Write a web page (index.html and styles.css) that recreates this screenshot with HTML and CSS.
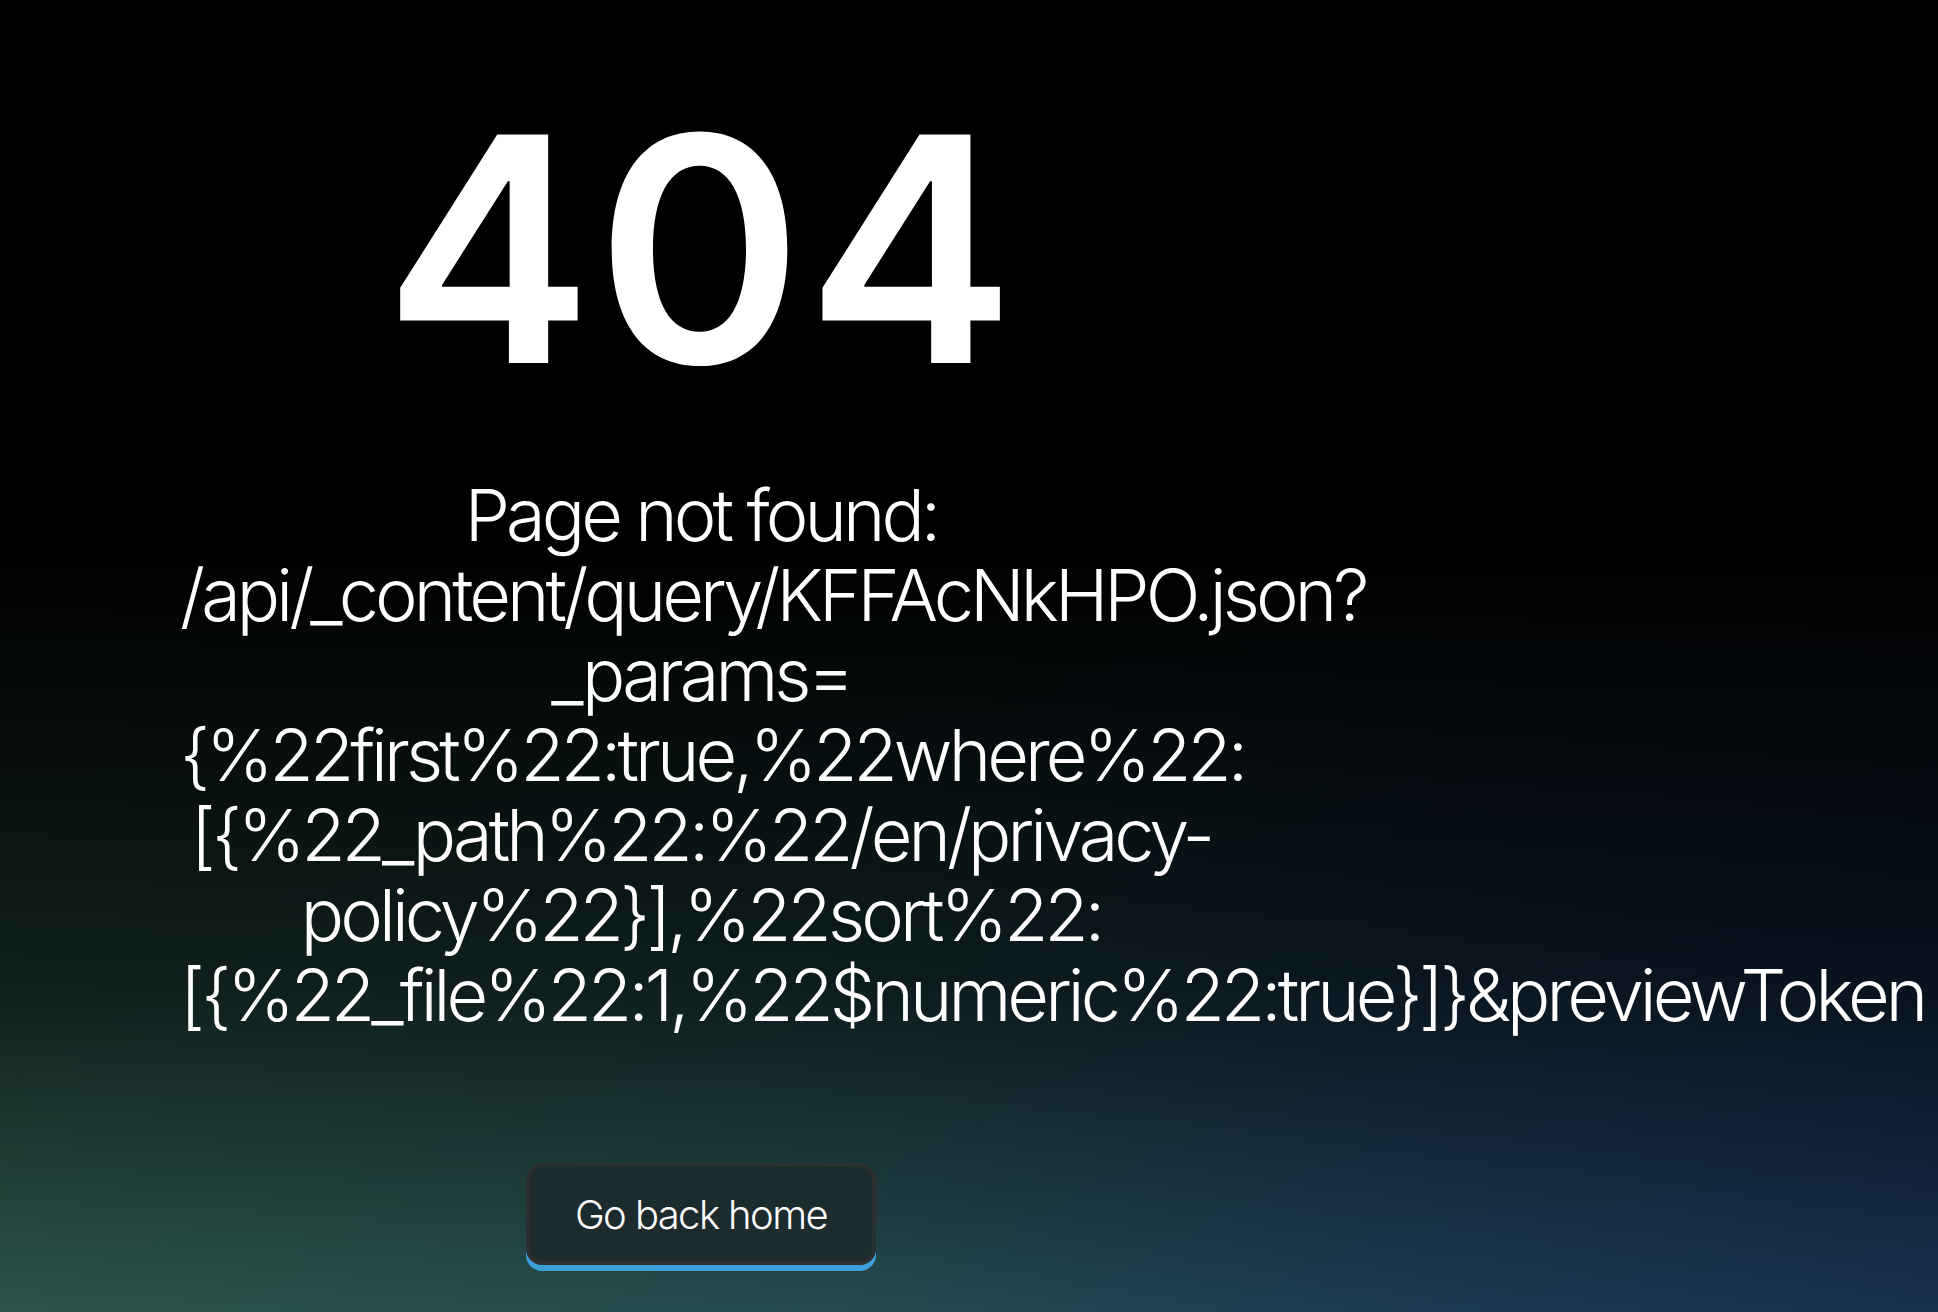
FILE: index.html
```html
<!DOCTYPE html>
<html lang="en">
<head>
<meta charset="utf-8">
<title>404 - Page not found</title>
<link rel="stylesheet" href="styles.css">
</head>
<body>
<div class="page">
  <main class="content">
    <h1 class="code">404</h1>
    <p class="message">Page not found:<br>/api/_content/query/KFFAcNkHPO.json?<br>_params=<br>{%22first%22:true,%22where%22:<br>[{%22_path%22:%22/en/privacy-<br>policy%22}],%22sort%22:<br>[{%22_file%22:1,%22$numeric%22:true}]}&amp;previewToken</p>
    <a class="home-btn" href="/">Go back home</a>
  </main>
</div>
</body>
</html>
```
FILE: styles.css
```css
html, body {
  margin: 0;
  padding: 0;
  height: 100%;
}

body {
  color: #ffffff;
  font-family: Inter, "Noto Sans", "Liberation Sans", sans-serif;
  overflow: hidden;
  background-color: #000;
  background-image:
    linear-gradient(to bottom, #000 0%, #000 42%, rgba(0, 0, 0, 0.62) 75%, rgba(0, 0, 0, 0) 100%),
    linear-gradient(to right, #2b544a 0%, #234a4e 45%, #1c3b53 72%, #17304f 100%);
  -webkit-font-smoothing: antialiased;
}

.page {
  min-height: 100vh;
  padding-left: 180px;
  box-sizing: border-box;
}

.content {
  width: 1042px;
  padding-top: 91px;
  display: flex;
  flex-direction: column;
  align-items: center;
  text-align: center;
}

.code {
  margin: 0 0 68px;
  font-size: 314px;
  line-height: 316px;
  font-weight: 600;
  letter-spacing: 3px;
}

.message {
  align-self: stretch;
  margin: 0 0 128px;
  font-size: 72px;
  line-height: 80px;
  font-weight: 300;
  letter-spacing: -3.9px;
  white-space: nowrap;
}

.home-btn {
  display: flex;
  align-items: center;
  justify-content: center;
  box-sizing: border-box;
  width: 350px;
  height: 102px;
  border: 4px solid #2b2f30;
  border-radius: 16px;
  background: #1c2b2d;
  color: #ffffff;
  font-size: 40px;
  font-weight: 350;
  letter-spacing: -1.6px;
  text-decoration: none;
  box-shadow: 0 6px 0 0 #3d9fd9;
}
```
